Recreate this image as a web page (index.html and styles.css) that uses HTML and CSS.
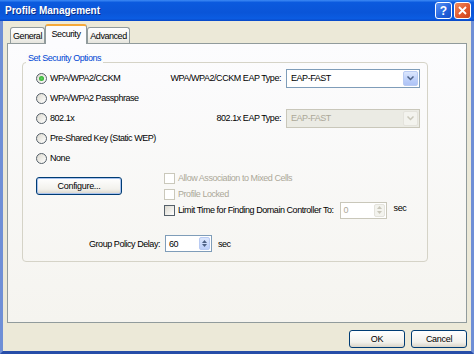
FILE: index.html
```html
<!DOCTYPE html>
<html lang="en">
<head>
  <meta charset="UTF-8" />
  <title>Profile Management</title>
  <link rel="stylesheet" href="styles.css">
</head>
<body>
  <div class="window">
    <div class="titlebar">
      <span class="title">Profile Management</span>
      <div class="title-buttons">
        <span class="tbtn help">?</span>
        <span class="tbtn close">
          <svg width="9" height="9" viewBox="0 0 9 9"><path d="M1 1 L8 8 M8 1 L1 8" stroke="#fff" stroke-width="1.8"/></svg>
        </span>
      </div>
    </div>

    <div class="client">
      <div class="tabs">
        <span class="tab tab-general">General</span>
        <span class="tab active tab-security">Security</span>
        <span class="tab tab-advanced">Advanced</span>
      </div>

      <div class="panel">
        <div class="group">
          <span class="group-title">Set Security Options</span>

          <div class="opts">
            <div class="col-left">
              <div class="radio checked"><span class="dot"></span>WPA/WPA2/CCKM</div>
              <div class="radio"><span class="dot"></span>WPA/WPA2 Passphrase</div>
              <div class="radio"><span class="dot"></span>802.1x</div>
              <div class="radio"><span class="dot"></span>Pre-Shared Key (Static WEP)</div>
              <div class="radio"><span class="dot"></span>None</div>
              <button class="btn btn-configure">Configure...</button>
            </div>

            <div class="col-right">
              <div class="field-row">
                <span class="field-label">WPA/WPA2/CCKM EAP Type:</span>
                <div class="combo">
                  <span class="combo-text">EAP-FAST</span>
                  <span class="combo-btn">
                    <svg width="7" height="5" viewBox="0 0 7 5"><path d="M0.5 0.5 L3.5 3.5 L6.5 0.5" fill="none" stroke="#4d6185" stroke-width="1.5"/></svg>
                  </span>
                </div>
              </div>
              <div class="field-row"></div>
              <div class="field-row">
                <span class="field-label">802.1x EAP Type:</span>
                <div class="combo disabled">
                  <span class="combo-text">EAP-FAST</span>
                  <span class="combo-btn">
                    <svg width="7" height="5" viewBox="0 0 7 5"><path d="M0.5 0.5 L3.5 3.5 L6.5 0.5" fill="none" stroke="#c9c7ba" stroke-width="1.5"/></svg>
                  </span>
                </div>
              </div>

              <div class="checks">
                <div class="check disabled"><span class="box"></span>Allow Association to Mixed Cells</div>
                <div class="check disabled"><span class="box"></span>Profile Locked</div>
                <div class="check">
                  <span class="box"></span>Limit Time for Finding Domain Controller To:
                  <div class="spin disabled">
                    <span class="spin-text">0</span>
                    <span class="spin-btns">
                      <svg width="5" height="3" viewBox="0 0 5 3"><path d="M0 3 L2.5 0 L5 3 Z" fill="#c9c7ba"/></svg>
                      <svg width="5" height="3" viewBox="0 0 5 3"><path d="M0 0 L2.5 3 L5 0 Z" fill="#c9c7ba"/></svg>
                    </span>
                  </div>
                  <span class="unit">sec</span>
                </div>
              </div>
            </div>
          </div>

          <div class="policy-row">
            <span class="policy-label">Group Policy Delay:</span>
            <div class="spin">
              <span class="spin-text">60</span>
              <span class="spin-btns">
                <svg width="5" height="3" viewBox="0 0 5 3"><path d="M0 3 L2.5 0 L5 3 Z" fill="#4d6185"/></svg>
                <svg width="5" height="3" viewBox="0 0 5 3"><path d="M0 0 L2.5 3 L5 0 Z" fill="#4d6185"/></svg>
              </span>
            </div>
            <span class="unit">sec</span>
          </div>
        </div>
      </div>

      <div class="footer">
        <button class="btn">OK</button>
        <button class="btn">Cancel</button>
      </div>
    </div>
  </div>
</body>
</html>
```

FILE: styles.css
```css
* {
  box-sizing: border-box;
}

body {
  margin: 0;
  font-family: "Liberation Sans", Arial, sans-serif;
  font-size: 9px;
  letter-spacing: -0.45px;
  white-space: nowrap;
  color: #000;
}

.window {
  width: 474px;
  height: 354px;
  display: flex;
  flex-direction: column;
  background-color: #ece9d8;
}

.titlebar {
  height: 21px;
  display: flex;
  align-items: center;
  justify-content: space-between;
  padding: 0 3px 0 5px;
  background: linear-gradient(#3d8af5 0%, #0b5ade 12%, #0a55d8 60%, #0b5ce2 88%, #0847c6 100%);
}

.title {
  color: #fff;
  font-weight: bold;
  font-size: 10px;
  letter-spacing: 0;
  text-shadow: 1px 1px 0 #0a2f8a;
}

.title-buttons {
  display: flex;
  gap: 2px;
}

.tbtn {
  width: 17px;
  height: 17px;
  border: 1px solid #fff;
  border-radius: 3px;
  display: flex;
  align-items: center;
  justify-content: center;
  color: #fff;
  font-weight: bold;
  font-size: 12px;
  letter-spacing: 0;
}

.help {
  background: linear-gradient(135deg, #5b93f5, #2262dc 60%, #1a4fc4);
}

.close {
  background: linear-gradient(135deg, #f08b5d, #e0562b 60%, #c8421c);
}

.client {
  flex: 1;
  display: flex;
  flex-direction: column;
  border: solid #6f8fd6;
  border-width: 0 3px 3px 3px;
  border-bottom-color: #274da8;
  padding: 3px 4px 0 4px;
}

.tabs {
  height: 19px;
  display: flex;
  align-items: flex-end;
  padding-left: 3px;
  position: relative;
  z-index: 1;
}

.tab {
  height: 16px;
  border: 1px solid #919b9c;
  border-bottom: none;
  border-radius: 3px 3px 0 0;
  background: linear-gradient(#fff, #f3f3ef 60%, #e6e5de);
  display: flex;
  align-items: center;
  justify-content: center;
}

.tab-general {
  width: 35px;
}

.tab-security {
  width: 42px;
}

.tab-advanced {
  width: 43px;
}

.tab.active {
  height: 20px;
  background: #fcfcfe;
  border-top: 2px solid #f5a93a;
  margin-bottom: -1px;
  padding-bottom: 3px;
}

.panel {
  height: 280px;
  border: 1px solid #919b9c;
  background: linear-gradient(#fcfcfe, #f5f4ef);
  padding: 18px 0 0 14px;
}

.group {
  width: 406px;
  height: 200px;
  border: 1px solid #d5d3c7;
  border-radius: 4px;
  position: relative;
  padding: 5px 7px 0 13px;
}

.group-title {
  position: absolute;
  top: -10px;
  left: 3px;
  padding: 0 2px;
  line-height: 11px;
  color: #0046d5;
  background-color: #fbfbfb;
}

.opts {
  display: flex;
}

.col-left {
  width: 128px;
}

.col-right {
  width: 256px;
}

.radio {
  height: 20px;
  display: flex;
  align-items: center;
  gap: 3px;
}

.dot {
  flex: none;
  width: 11px;
  height: 11px;
  border: 1px solid #55606a;
  border-radius: 50%;
  background: linear-gradient(135deg, #dcd9cf, #fff);
  position: relative;
}

.radio.checked .dot::after {
  content: "";
  position: absolute;
  left: 2px;
  top: 2px;
  width: 5px;
  height: 5px;
  border-radius: 50%;
  background: radial-gradient(#5fd35f, #21a121);
}

.btn {
  font-family: inherit;
  font-size: 9px;
  letter-spacing: -0.3px;
  height: 18px;
  border: 1px solid #003c74;
  border-radius: 3px;
  background: linear-gradient(#fff, #f2f1ec 70%, #d9d4c8);
  padding: 0;
  color: #000;
}

.btn-configure {
  width: 86px;
  margin-top: 9px;
  box-shadow: inset 0 0 0 1px #a8c2ee;
}

.field-row {
  height: 20px;
  display: flex;
  align-items: center;
  justify-content: flex-end;
  gap: 5px;
}

.combo {
  width: 134px;
  height: 19px;
  border: 1px solid #7f9db9;
  background-color: #fff;
  display: flex;
  align-items: center;
  justify-content: space-between;
  padding: 1px;
}

.combo-text {
  padding-left: 3px;
}

.combo-btn {
  width: 15px;
  height: 15px;
  border: 1px solid #b9cbf3;
  border-radius: 2px;
  background: linear-gradient(#dce7fd, #bccffa 60%, #aec3f6);
  display: flex;
  align-items: center;
  justify-content: center;
}

.combo.disabled {
  border-color: #c9c7ba;
  background-color: #ebebe4;
  color: #aca899;
}

.combo.disabled .combo-btn {
  border-color: #e4e3dc;
  background: #f3f3ee;
}

.checks {
  margin-top: 42px;
}

.check {
  height: 16px;
  display: flex;
  align-items: center;
  gap: 3px;
}

.box {
  flex: none;
  width: 11px;
  height: 11px;
  border: 1px solid #55606a;
  background: linear-gradient(135deg, #dcd9cf, #fff);
}

.check.disabled {
  color: #aca899;
}

.check.disabled .box {
  border-color: #cac8bb;
  background: #fff;
}

.spin {
  width: 47px;
  height: 17px;
  border: 1px solid #7f9db9;
  background-color: #fff;
  display: flex;
  align-items: center;
  justify-content: space-between;
  padding: 1px;
}

.check .spin {
  margin-left: 3px;
}

.spin-text {
  padding-left: 2px;
}

.spin-btns {
  width: 11px;
  height: 13px;
  border: 1px solid #b9cbf3;
  border-radius: 2px;
  background: linear-gradient(#dce7fd, #bccffa);
  display: flex;
  flex-direction: column;
  align-items: center;
  justify-content: space-evenly;
}

.spin.disabled {
  border-color: #c9c7ba;
  color: #aca899;
}

.spin.disabled .spin-btns {
  border-color: #e4e3dc;
  background: #f3f3ee;
}

.unit {
  margin-left: 4px;
  align-self: flex-start;
  padding-top: 1px;
}

.policy-row {
  margin-top: 17px;
  height: 17px;
  display: flex;
  align-items: center;
}

.policy-label {
  width: 124px;
  text-align: right;
  margin-right: 5px;
}

.policy-row .unit {
  margin-left: 6px;
  align-self: center;
  padding-top: 0;
}

.footer {
  display: flex;
  justify-content: flex-end;
  gap: 6px;
  padding-top: 7px;
}

.footer .btn {
  width: 56px;
}
```
